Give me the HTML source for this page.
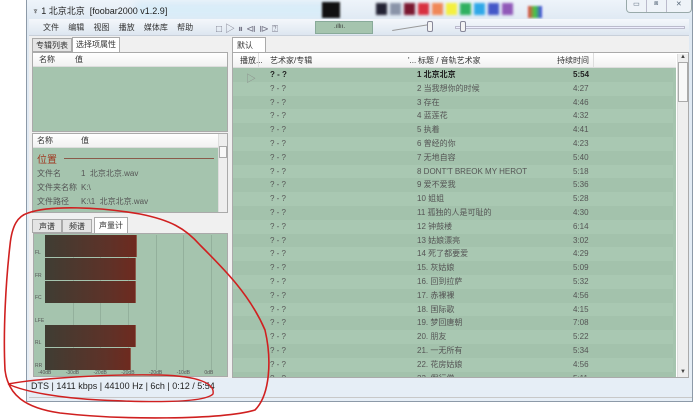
<!DOCTYPE html>
<html><head><meta charset="utf-8"><style>
*{margin:0;padding:0;box-sizing:border-box}
body{width:700px;height:420px;background:#fff;position:relative;overflow:hidden;font-family:"Liberation Sans","Noto Sans CJK SC",sans-serif;font-size:8px;color:#333}
.a{position:absolute}
.g{background:#a5c4ae}
.t{white-space:nowrap}
.row{position:absolute;left:0;width:440px;height:13.8px;line-height:13.8px;color:#555}
.hd{background:linear-gradient(#fff,#f2f2f2);border-bottom:1px solid #ddd;height:14px;line-height:14px;color:#333}
.bar{position:absolute;left:45px;height:22px;background:linear-gradient(90deg,#3f3d33,#5e3228 70%,#6e2a1f);border-right:1px solid #8a5a4a}
.vg{position:absolute;top:235px;width:1px;height:135px;background:#93b09c}
</style></head><body>
<div class="a" style="left:26px;top:0;width:667px;height:402px;background:linear-gradient(#eef4fa,#dfe9f3 20px,#e6eef6);border:1px solid #8d9aa8;border-top:none"></div>
<div class="a" style="left:135px;top:2px;width:200px;height:16px;background:#d8ecf8;filter:blur(4px)"></div>
<div class="a" style="left:322px;top:2px;width:18px;height:16px;background:#111;filter:blur(1px)"></div>
<div class="a t" style="left:376px;top:3px;height:12px;width:140px;display:flex;gap:3px;filter:blur(1.2px)">
<span style="width:11px;background:#223"></span><span style="width:11px;background:#8a94a8"></span><span style="width:11px;background:#7a1830"></span><span style="width:11px;background:#d83040"></span><span style="width:11px;background:#f08858"></span><span style="width:11px;background:#f4f040"></span><span style="width:11px;background:#30b060"></span><span style="width:11px;background:#30a8e8"></span><span style="width:11px;background:#4458c8"></span><span style="width:11px;background:#9058b8"></span></div>
<div class="a" style="left:528px;top:6px;width:14px;height:12px;background:linear-gradient(90deg,#e44,#4c4,#44e);filter:blur(1px)"></div>
<div class="a t" style="left:32px;top:4px;font-size:9px;color:#222">♆ 1 北京北京 &nbsp;[foobar2000 v1.2.9]</div>
<div class="a" style="left:626px;top:0;width:66px;height:13px;border:1px solid #9aa;border-top:none;border-radius:0 0 4px 4px;background:#eef3f8;display:flex;font-size:7px;color:#567">
<span style="flex:1;text-align:center;border-right:1px solid #bbc">▭</span><span style="flex:1;text-align:center;border-right:1px solid #bbc">⧈</span><span style="flex:1.3;text-align:center">✕</span></div>
<div class="a" style="left:29px;top:19px;width:660px;height:17px;background:linear-gradient(#f4f7fb,#dde6f0);border-bottom:1px solid #c8d0da"></div>
<div class="a t" style="left:43px;top:22px;font-size:8px;word-spacing:7px">文件 编辑 视图 播放 媒体库 帮助</div>
<div class="a t" style="left:216px;top:20px;font-size:10px;color:#778;letter-spacing:3px">□▷⏸⧏⧐⍰</div>
<div class="a" style="left:315px;top:21px;width:58px;height:13px;background:#a5c4ae;border:1px solid #8a9"></div>
<div class="a t" style="left:334px;top:24px;font-size:6px;color:#333">.ıllıı.</div>
<div class="a" style="left:392px;top:27px;width:38px;height:1px;background:#999;transform:rotate(-9deg)"></div>
<div class="a" style="left:427px;top:21px;width:6px;height:11px;border:1px solid #889;border-radius:2px;background:#f4f4f4"></div>
<div class="a" style="left:455px;top:26px;width:230px;height:3px;border:1px solid #bbc;background:#eef"></div>
<div class="a" style="left:460px;top:21px;width:6px;height:11px;border:1px solid #889;border-radius:2px;background:#f4f4f4"></div>
<div class="a" style="left:29px;top:36px;width:660px;height:342px;background:#f0f0f0"></div>
<div class="a t" style="left:32px;top:38px;width:40px;height:14px;border:1px solid #aaa;background:#e4e4e4;text-align:center;line-height:13px">专辑列表</div>
<div class="a t" style="left:72px;top:37px;width:48px;height:15px;border:1px solid #aaa;border-bottom:none;background:#fff;text-align:center;line-height:14px">选择项属性</div>
<div class="a" style="left:32px;top:52px;width:196px;height:80px;border:1px solid #aaa;background:#fff"></div>
<div class="a hd t" style="left:33px;top:53px;width:194px;padding-left:6px">名称<span style="margin-left:20px">值</span></div>
<div class="a g" style="left:33px;top:67px;width:194px;height:64px"></div>
<div class="a" style="left:32px;top:133px;width:196px;height:80px;border:1px solid #aaa;background:#fff"></div>
<div class="a hd t" style="left:33px;top:134px;width:185px;padding-left:4px">名称<span style="margin-left:28px">值</span></div>
<div class="a g" style="left:33px;top:148px;width:185px;height:64px"></div>
<div class="a" style="left:218px;top:134px;width:9px;height:78px;background:#eee;border-left:1px solid #ddd"><div style="margin-top:12px;height:12px;border:1px solid #aaa;background:#f8f8f8"></div></div>
<div class="a t" style="left:37px;top:151px;font-size:10px;color:#a03820">位置</div>
<div class="a" style="left:64px;top:158px;width:150px;height:1px;background:#8a5a4a"></div>
<div class="a t" style="left:37px;top:167px;color:#555;line-height:14px">文件名<br>文件夹名称<br>文件路径</div>
<div class="a t" style="left:81px;top:167px;color:#555;line-height:14px">1 &nbsp;北京北京.wav<br>K:\<br>K:\1 &nbsp;北京北京.wav</div>
<div class="a" style="left:32px;top:217px;width:196px;height:160px;background:#f0f0f0"></div>
<div class="a t" style="left:32px;top:219px;width:30px;height:14px;border:1px solid #aaa;background:#e4e4e4;text-align:center;line-height:13px">声谱</div>
<div class="a t" style="left:62px;top:219px;width:30px;height:14px;border:1px solid #aaa;background:#e4e4e4;text-align:center;line-height:13px">频谱</div>
<div class="a t" style="left:94px;top:217px;width:34px;height:16px;border:1px solid #aaa;border-bottom:none;background:#fff;text-align:center;line-height:15px">声量计</div>
<div class="a g" style="left:33px;top:233px;width:195px;height:144px;border:1px solid #aaa"></div>
<div class="vg" style="left:73px"></div><div class="vg" style="left:100px"></div><div class="vg" style="left:128px"></div><div class="vg" style="left:156px"></div><div class="vg" style="left:183px"></div><div class="vg" style="left:211px"></div>
<div class="bar" style="top:235px;width:92px"></div>
<div class="bar" style="top:258px;width:91px"></div>
<div class="bar" style="top:281px;width:91px"></div>
<div class="bar" style="top:325px;width:91px"></div>
<div class="bar" style="top:348px;width:86px"></div>
<div class="a t" style="left:35px;top:242px;font-size:5px;color:#555;line-height:22.5px">FL<br>FR<br>FC<br>LFE<br>RL<br>RR</div>
<div class="a t" style="left:38px;top:370px;font-size:5px;color:#555;word-spacing:13px">-40dB -30dB -20dB -20dB -20dB -10dB 0dB</div>
<div class="a t" style="left:232px;top:37px;width:34px;height:16px;border:1px solid #aaa;border-bottom:none;background:#fff;line-height:15px;padding-left:4px">默认</div>
<div class="a" style="left:232px;top:52px;width:457px;height:326px;border:1px solid #aaa;background:#fff"></div>
<div class="a hd t" style="left:233px;top:54px;width:443px">
<span class="a" style="left:7px">播放...</span><span class="a" style="left:25px;top:-1px;width:1px;height:14px;background:#ddd"></span><span class="a" style="left:37px">艺术家/专辑</span><span class="a" style="left:175px">'...</span><span class="a" style="left:185px">标题 / 音轨艺术家</span><span class="a" style="left:324px">持续时间</span><span class="a" style="left:360px;top:-1px;width:1px;height:14px;background:#ddd"></span></div>
<div class="a" style="left:677px;top:54px;width:11px;height:323px;background:#eee;border-left:1px solid #ddd;font-size:6px;color:#444;text-align:center">▲<div style="margin-top:2px;height:40px;border:1px solid #aaa;background:#f8f8f8"></div><div style="position:absolute;bottom:2px;width:10px">▼</div></div>
<div class="a g" id="pl" style="left:233px;top:68px;width:443px;height:309px;overflow:hidden">
<div class="a" style="left:13px;top:2px;font-size:10px;color:#888">▷</div>
</div>
<div class="a t" style="left:31px;top:381px;font-size:9px;color:#222">DTS | 1411 kbps | 44100 Hz | 6ch | 0:12 / 5:54</div>
<div class="a" style="left:29px;top:397px;width:663px;height:1px;background:#c8c8c8"></div>
<svg class="a" style="left:0;top:0" width="700" height="420" viewBox="0 0 700 420">
<path d="M28,213 C50,205 100,207 140,214 C170,220 185,228 200,245 C225,270 250,295 265,330 C272,360 270,395 255,410 C220,420 120,420 60,413 C25,408 8,395 5,370 C3,330 6,280 10,245 C12,225 18,216 28,213" fill="none" stroke="#d02020" stroke-width="1.6"/>
<path d="M8,384 C40,378 110,374 160,375 C200,376 215,384 213,394 C205,402 160,403 100,400 C60,398 25,392 8,384" fill="none" stroke="#d02020" stroke-width="1.4"/>
</svg>
<script>
var d=[["1 北京北京","5:54"],["2 当我想你的时候","4:27"],["3 存在","4:46"],["4 蓝莲花","4:32"],["5 执着","4:41"],["6 曾经的你","4:23"],["7 无地自容","5:40"],["8 DONT'T BREOK MY HEROT","5:18"],["9 爱不爱我","5:36"],["10 姐姐","5:28"],["11 孤独的人是可耻的","4:30"],["12 钟鼓楼","6:14"],["13 姑娘漂亮","3:02"],["14 死了都要爱","4:29"],["15. 灰姑娘","5:09"],["16. 回到拉萨","5:32"],["17. 赤裸裸","4:56"],["18. 国际歌","4:15"],["19. 梦回唐朝","7:08"],["20. 朋友","5:22"],["21. 一无所有","5:34"],["22. 花房姑娘","4:56"],["23. 假行僧","5:11"]];
var p=document.getElementById('pl'),h='';
d.forEach(function(r,i){var b=i==0?'font-weight:bold;color:#222;':'';h+='<div class="row t" style="top:'+(i*13.8)+'px;background:'+(i%2?'#a9c8b2':'#a3c2ac')+';'+b+'"><span class="a" style="left:37px">? - ?</span><span class="a" style="left:184px">'+r[0]+'</span><span class="a" style="left:340px">'+r[1]+'</span></div>';});
p.insertAdjacentHTML('beforeend',h);
p.appendChild(p.children[0]);
</script>
</body></html>
